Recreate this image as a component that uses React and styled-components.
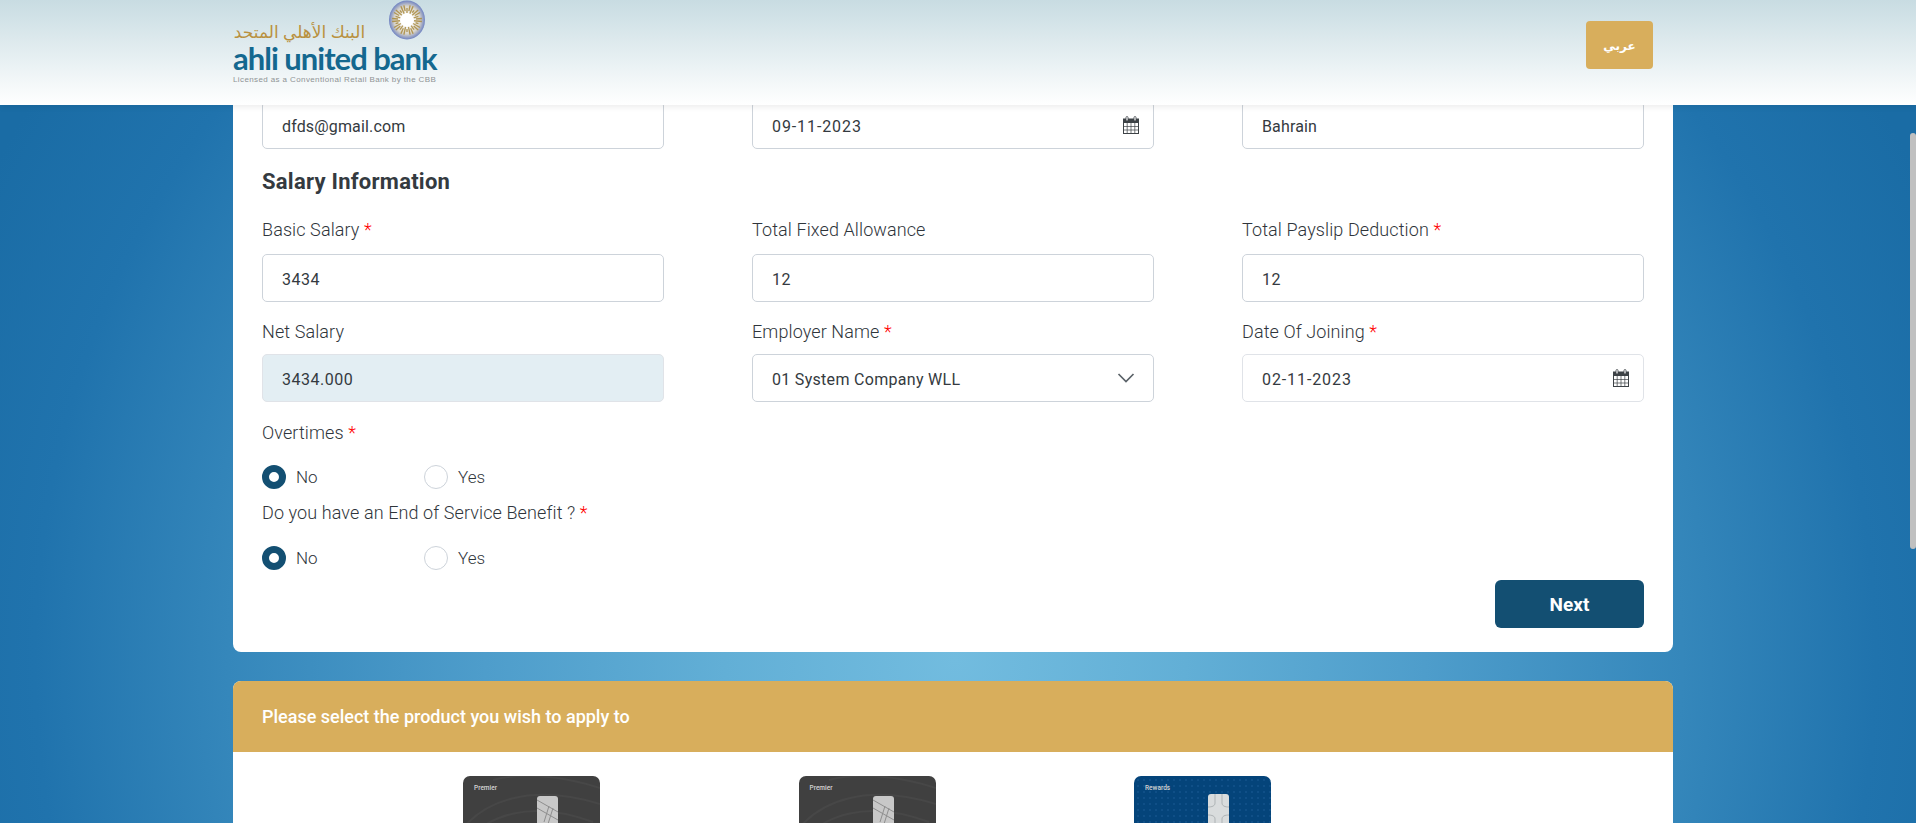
import React from 'react'
import styled, { createGlobalStyle } from 'styled-components'

const GlobalStyle = createGlobalStyle`
  html, body {
    margin: 0;
    height: 100%;
    overflow: hidden;
  }
  body {
    font-family: "Roboto", "Open Sans", sans-serif;
    color: #343a40;
  }
  * { box-sizing: border-box; }
`

const Page = styled.div`
  position: relative;
  display: flex;
  flex-direction: column;
  height: 823px;
  overflow: hidden;
  background: radial-gradient(circle 1080px at 955px 660px, #72bcdf 0, #62afd6 230px, #4e9dcb 470px, #3587bb 727px, #2073ad 920px, #1a6ca5 1080px);
`

const Header = styled.header`
  position: relative;
  z-index: 2;
  flex: none;
  height: 105px;
  padding: 0 263px 0 233px;
  display: flex;
  justify-content: space-between;
  align-items: flex-start;
  background: linear-gradient(180deg, #c8dce2 0%, #ffffff 100%);
  box-shadow: 0 2px 6px rgba(0, 0, 0, 0.08);
`

const Logo = styled.div`
  position: relative;
  width: 210px;
  padding-top: 21px;
`

const LogoArabic = styled.div`
  font-family: "Noto Sans", "DejaVu Sans", sans-serif;
  font-size: 17px;
  line-height: 22px;
  color: #b9913f;
  width: 133px;
  text-align: center;
  direction: rtl;
`

const LogoName = styled.div`
  margin-top: 2px;
  font-family: "Lato", sans-serif;
  font-weight: 700;
  font-size: 31px;
  line-height: 26px;
  letter-spacing: -1px;
  color: #14688f;
  white-space: nowrap;
`

const LogoTagline = styled.div`
  font-family: "Liberation Sans", sans-serif;
  font-size: 8px;
  line-height: 9px;
  letter-spacing: 0.39px;
  color: #8f9395;
  white-space: nowrap;
  margin-top: 4px;
`

const Seal = styled.svg`
  position: absolute;
  left: 155px;
  top: 0;
`

const LangButton = styled.button`
  margin-top: 21px;
  width: 67px;
  height: 48px;
  border: 0;
  border-radius: 4px;
  background: #d8ae5c;
  color: #fff;
  font-family: "Noto Sans", "DejaVu Sans", sans-serif;
  font-size: 12px;
  font-weight: 700;
`

const Main = styled.main`
  flex: 1;
  overflow: hidden;
  width: 1440px;
  margin-left: 233px;
`

const FormCard = styled.section`
  margin-top: -4px;
  height: 551px;
  padding: 0 29px;
  background: #fff;
  border-radius: 0 0 8px 8px;
`

const Row = styled.div`
  display: grid;
  grid-template-columns: repeat(3, 402px);
  column-gap: 88px;
  margin-bottom: ${(p) => p.$gap || 0}px;

  label {
    margin-bottom: ${(p) => p.$labelGap || 12}px;
  }
`

const Heading = styled.h2`
  margin: 18px 0 21px;
  font-size: 22px;
  line-height: 30px;
  letter-spacing: 0.25px;
  font-weight: 700;
  color: #343a40;
`

const Label = styled.label`
  display: block;
  height: 24px;
  margin-bottom: ${(p) => p.$gap || 12}px;
  font-size: 18px;
  line-height: 24px;
  letter-spacing: 0.1px;
  font-weight: 300;
  color: #2f353b;
  white-space: nowrap;
`

const Star = styled.span`
  color: #f00;
`

const Field = styled.div`
  height: 48px;
  padding: 2px 19px 0;
  display: flex;
  align-items: center;
  justify-content: space-between;
  border: 1px solid ${(p) => (p.$soft ? '#e0e3e8' : '#cdd3da')};
  border-radius: 5px;
  background: ${(p) => (p.$disabled ? '#e3eef3' : '#fff')};
  font-size: 16px;
  letter-spacing: ${(p) => p.$track || 0.15}px;
  color: #343a40;
`

const FieldIcon = styled.svg`
  flex: none;
  margin-top: -2px;
  margin-right: ${(p) => p.$right || 0}px;
`

const RadioRow = styled.div`
  display: flex;
  height: 24px;
  margin-bottom: ${(p) => p.$gap || 0}px;
`

const RadioItem = styled.div`
  width: 162px;
  display: flex;
  align-items: center;
  gap: 10px;
  font-size: 17px;
  font-weight: 300;
  color: #2f353b;
`

const RadioDot = styled.span`
  width: 24px;
  height: 24px;
  border-radius: 50%;
  background: #fff;
  border: ${(p) => (p.$on ? '7px solid #134f72' : '1px solid #cdd3da')};
`

const Actions = styled.div`
  display: flex;
  justify-content: flex-end;
  margin-top: 10px;
`

const NextButton = styled.button`
  width: 149px;
  height: 48px;
  border: 0;
  border-radius: 6px;
  background: #134f72;
  color: #fff;
  font-family: inherit;
  font-size: 19px;
  font-weight: 700;
`

const ProductPanel = styled.section`
  margin-top: 29px;
  height: 200px;
  background: #fff;
  border-radius: 8px 8px 0 0;
  overflow: hidden;
`

const ProductHeader = styled.div`
  height: 71px;
  padding: 0 29px;
  display: flex;
  align-items: center;
  background: #d8ae5c;
  color: #fff;
  font-size: 18px;
  font-weight: 500;
`

const ProductRow = styled.div`
  display: flex;
  padding: 24px 0 0 230px;
  gap: 198.5px;
`

const CreditCard = styled.div`
  position: relative;
  width: 137px;
  height: 88px;
  border-radius: 7px;
  overflow: hidden;
  background: ${(p) => (p.$blue ? '#04447a' : '#404040')};
`

const CardName = styled.span`
  position: absolute;
  left: 11px;
  top: 8px;
  color: #d4d4d4;
  font-size: 6.5px;
  line-height: 9px;
  font-weight: 500;
`

const CardArt = styled.svg`
  position: absolute;
  left: 0;
  top: 0;
`

const Chip = styled.svg`
  position: absolute;
  left: 74px;
  top: ${(p) => p.$top}px;
`

const Scrollbar = styled.div`
  position: absolute;
  z-index: 3;
  right: 0;
  top: 133px;
  width: 6px;
  height: 416px;
  border-radius: 3px;
  background: #c0c0c0;
`

const CalendarIcon = () => (
  <FieldIcon $right={-5} width="16" height="18" viewBox="0 0 16 18">
    <rect x="0.5" y="3" width="15" height="14.5" fill="#fff" stroke="#3d4246" strokeWidth="1" />
    <rect x="0.5" y="3" width="15" height="4" fill="#3d4246" />
    <path d="M0.5 10.5h15M0.5 14h15M4.2 7v10M8 7v10M11.8 7v10" stroke="#3d4246" strokeWidth="0.7" fill="none" />
    <rect x="3" y="0.5" width="2" height="4.5" rx="1" fill="#fff" stroke="#3d4246" strokeWidth="0.8" />
    <rect x="11" y="0.5" width="2" height="4.5" rx="1" fill="#fff" stroke="#3d4246" strokeWidth="0.8" />
  </FieldIcon>
)

const ChevronIcon = () => (
  <FieldIcon $right={-1} width="18" height="10" viewBox="0 0 18 10">
    <path d="M1.5 1l7.5 7.5 7.5-7.5" fill="none" stroke="#5a6268" strokeWidth="1.7" />
  </FieldIcon>
)

const SealMark = () => {
  const spokes = Array.from({ length: 30 }, (_, i) => (i * 360) / 30)
  return (
    <Seal width="38" height="40" viewBox="0 0 38 40">
      <defs>
        <radialGradient id="sealFill" cx="50%" cy="50%" r="50%">
          <stop offset="0.3" stopColor="#ffffff" />
          <stop offset="0.72" stopColor="#d6d2c8" />
          <stop offset="1" stopColor="#6f83c2" />
        </radialGradient>
      </defs>
      <ellipse cx="19" cy="20" rx="18" ry="19.5" fill="url(#sealFill)" />
      {spokes.map((a, i) => (
        <line
          key={a}
          x1="19"
          y1={i % 3 ? 5 : 8}
          x2="19"
          y2={i % 2 ? 11 : 13}
          stroke="#a98a3f"
          strokeWidth="1.4"
          transform={`rotate(${a} 19 20)`}
          opacity="0.85"
        />
      ))}
      <circle cx="19" cy="20" r="6.5" fill="#fff" />
    </Seal>
  )
}

const DotsArt = () => {
  const dots = []
  for (let y = 4; y < 88; y += 6) {
    for (let x = (y % 12 ? 4 : 7); x < 137; x += 6) {
      dots.push(<circle key={`${x}-${y}`} cx={x} cy={y} r="0.8" fill="#1f5f98" />)
    }
  }
  return (
    <CardArt width="137" height="88" viewBox="0 0 137 88">
      {dots}
    </CardArt>
  )
}

const ArcsArt = () => (
  <CardArt width="137" height="88" viewBox="0 0 137 88">
    <g fill="none" stroke="#474747" strokeWidth="2">
      <path d="M-6 60C20 22 70 8 137 28" />
      <path d="M-6 74C24 36 70 24 130 46" />
      <path d="M4 88C30 52 70 42 118 62" />
      <path d="M30 4C60 -4 100 0 137 12" />
    </g>
  </CardArt>
)

const ChipMark = ({ plain }) => (
  <Chip $top={plain ? 18 : 20} width="21" height="34" viewBox="0 0 21 34">
    <rect width="21" height="34" rx="3" fill={plain ? '#d9dcdd' : '#c8c8c8'} />
    {plain ? (
      <path d="M7 0v9c0 3-3 4-7 4M14 0v9c0 3 3 4 7 4M7 34v-9c0-3-3-4-7-4M14 34v-9c0-3 3-4 7-4" stroke="#aeb3b5" fill="none" />
    ) : (
      <path d="M0 4l21 12M0 12l21 12M12 10l-5 16M16 12l-5 16" stroke="#8e8e8e" fill="none" />
    )}
  </Chip>
)

const ProductCard = ({ name, blue }) => (
  <CreditCard $blue={blue}>
    {blue ? <DotsArt /> : <ArcsArt />}
    <CardName>{name}</CardName>
    <ChipMark plain={blue} />
  </CreditCard>
)

const Required = ({ children, gap }) => (
  <Label $gap={gap}>
    {children} <Star>*</Star>
  </Label>
)

const App = () => {
  return (
    <Page>
      <GlobalStyle />
      <Header>
        <Logo>
          <SealMark />
          <LogoArabic>البنك الأهلي المتحد</LogoArabic>
          <LogoName>ahli united bank</LogoName>
          <LogoTagline>Licensed as a Conventional Retail Bank by the CBB</LogoTagline>
        </Logo>
        <LangButton>عربي</LangButton>
      </Header>
      <Main>
        <FormCard>
          <Row>
            <Field>dfds@gmail.com</Field>
            <Field $track={0.9}>09-11-2023<CalendarIcon /></Field>
            <Field>Bahrain</Field>
          </Row>
          <Heading>Salary Information</Heading>
          <Row $gap={18}>
            <div>
              <Required>Basic Salary</Required>
              <Field $track={0.5}>3434</Field>
            </div>
            <div>
              <Label>Total Fixed Allowance</Label>
              <Field $track={0.5}>12</Field>
            </div>
            <div>
              <Required>Total Payslip Deduction</Required>
              <Field $track={0.5}>12</Field>
            </div>
          </Row>
          <Row $gap={19} $labelGap={10}>
            <div>
              <Label>Net Salary</Label>
              <Field $disabled $soft $track={0.5}>3434.000</Field>
            </div>
            <div>
              <Required>Employer Name</Required>
              <Field $track={0.3}>01 System Company WLL<ChevronIcon /></Field>
            </div>
            <div>
              <Required>Date Of Joining</Required>
              <Field $soft $track={0.9}>02-11-2023<CalendarIcon /></Field>
            </div>
          </Row>
          <Required gap={20}>Overtimes</Required>
          <RadioRow $gap={12}>
            <RadioItem><RadioDot $on />No</RadioItem>
            <RadioItem><RadioDot />Yes</RadioItem>
          </RadioRow>
          <Required gap={21}>Do you have an End of Service Benefit ?</Required>
          <RadioRow>
            <RadioItem><RadioDot $on />No</RadioItem>
            <RadioItem><RadioDot />Yes</RadioItem>
          </RadioRow>
          <Actions>
            <NextButton>Next</NextButton>
          </Actions>
        </FormCard>
        <ProductPanel>
          <ProductHeader>Please select the product you wish to apply to</ProductHeader>
          <ProductRow>
            <ProductCard name="Premier" />
            <ProductCard name="Premier" />
            <ProductCard name="Rewards" blue />
          </ProductRow>
        </ProductPanel>
      </Main>
      <Scrollbar />
    </Page>
  )
}

export default App
